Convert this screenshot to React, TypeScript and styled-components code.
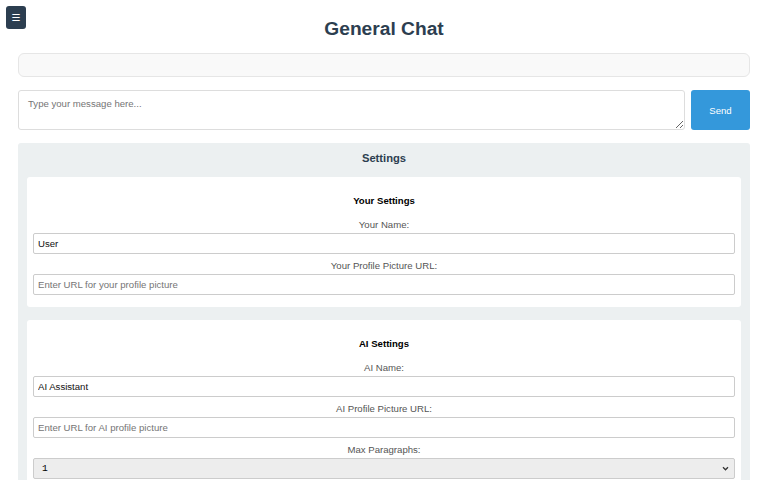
import React from "react";
import styled, { createGlobalStyle } from "styled-components";

const GlobalStyle = createGlobalStyle`
  html, body {
    margin: 0;
    padding: 0;
    background: #ffffff;
    font-family: "Liberation Sans", Arial, sans-serif;
  }
  * { box-sizing: border-box; }
`;

const MenuButton = styled.button`
  position: fixed;
  top: 6px;
  left: 6px;
  width: 20px;
  height: 23px;
  border: none;
  border-radius: 3px;
  background: #2c3e50;
  color: #ffffff;
  font-size: 10px;
  line-height: 23px;
  padding: 0;
  font-family: "DejaVu Sans", sans-serif;
  cursor: pointer;
`;

const Page = styled.div`
  padding: 17px 18px 0;
`;

const Title = styled.h1`
  margin: 0 0 12px;
  font-size: 19.2px;
  line-height: 24px;
  font-weight: bold;
  text-align: center;
  color: #2c3e50;
`;

const ChatBox = styled.div`
  height: 24px;
  background: #f9f9f9;
  border: 1px solid #e6e6e6;
  border-radius: 6px;
  margin-bottom: 13px;
`;

const InputRow = styled.div`
  display: flex;
  gap: 6px;
  margin-bottom: 13px;
`;

const MessageArea = styled.textarea`
  flex: 1;
  height: 40px;
  padding: 7px 9px;
  border: 1px solid #dddddd;
  border-radius: 3px;
  font-family: "Liberation Sans", Arial, sans-serif;
  font-size: 9.6px;
  line-height: 11px;
  color: #000;
  &::placeholder { color: #757575; }
`;

const SendButton = styled.button`
  width: 59px;
  height: 40px;
  border: none;
  border-radius: 3px;
  background: #3498db;
  color: #ffffff;
  font-family: "Liberation Sans", Arial, sans-serif;
  font-size: 9.6px;
`;

const SettingsPanel = styled.section`
  background: #ecf0f1;
  border-radius: 3px;
  padding: 9px;
`;

const PanelTitle = styled.h2`
  margin: 0 0 12px;
  font-size: 11.2px;
  line-height: 13px;
  font-weight: bold;
  text-align: center;
  color: #2c3e50;
`;

const Card = styled.div`
  display: flex;
  flex-direction: column;
  background: #ffffff;
  border-radius: 3px;
  padding: 6px 6px 12px;
  margin-bottom: 13px;
`;

const CardTitle = styled.h3`
  margin: 12px 0 7px;
  font-size: 9.6px;
  line-height: 11px;
  font-weight: bold;
  text-align: center;
  color: #000;
`;

const Label = styled.label`
  display: block;
  margin: 6px 0 3px;
  font-size: 9.6px;
  line-height: 11px;
  text-align: center;
  color: #555555;
`;

const TextInput = styled.input`
  display: block;
  width: 100%;
  height: 21px;
  padding: 0 4px;
  border: 1px solid #cccccc;
  border-radius: 2px;
  font-family: "Liberation Sans", Arial, sans-serif;
  font-size: 9.6px;
  font-weight: normal;
  color: #111;
  &::placeholder { color: #757575; }
`;

const chevron =
  "data:image/svg+xml;utf8," +
  encodeURIComponent(
    "<svg xmlns='http://www.w3.org/2000/svg' width='8' height='6' viewBox='0 0 8 6'><path d='M1 1.5 L4 4.5 L7 1.5' fill='none' stroke='#333' stroke-width='1.6'/></svg>"
  );

const Select = styled.select`
  display: block;
  width: 100%;
  height: 21px;
  padding: 0 8px;
  border: 1px solid #cccccc;
  border-radius: 2px;
  appearance: none;
  -webkit-appearance: none;
  background-color: #ededed;
  background-image: url("${chevron}");
  background-repeat: no-repeat;
  background-position: right 5px center;
  background-size: 7px 5px;
  font-family: "Liberation Mono", monospace;
  font-size: 9.6px;
  color: #000;
`;

export default function App() {
  return (
    <>
      <GlobalStyle />
      <MenuButton aria-label="Menu">☰</MenuButton>
      <Page>
        <Title>General Chat</Title>
        <ChatBox />
        <InputRow>
          <MessageArea placeholder="Type your message here..." />
          <SendButton>Send</SendButton>
        </InputRow>
        <SettingsPanel>
          <PanelTitle>Settings</PanelTitle>
          <Card>
            <CardTitle>Your Settings</CardTitle>
            <Label>Your Name:</Label>
            <TextInput defaultValue="User" />
            <Label>Your Profile Picture URL:</Label>
            <TextInput placeholder="Enter URL for your profile picture" />
          </Card>
          <Card>
            <CardTitle>AI Settings</CardTitle>
            <Label>AI Name:</Label>
            <TextInput defaultValue="AI Assistant" />
            <Label>AI Profile Picture URL:</Label>
            <TextInput placeholder="Enter URL for AI profile picture" />
            <Label>Max Paragraphs:</Label>
            <Select defaultValue="1">
              <option value="1">1</option>
              <option value="2">2</option>
              <option value="3">3</option>
            </Select>
          </Card>
        </SettingsPanel>
      </Page>
    </>
  );
}
